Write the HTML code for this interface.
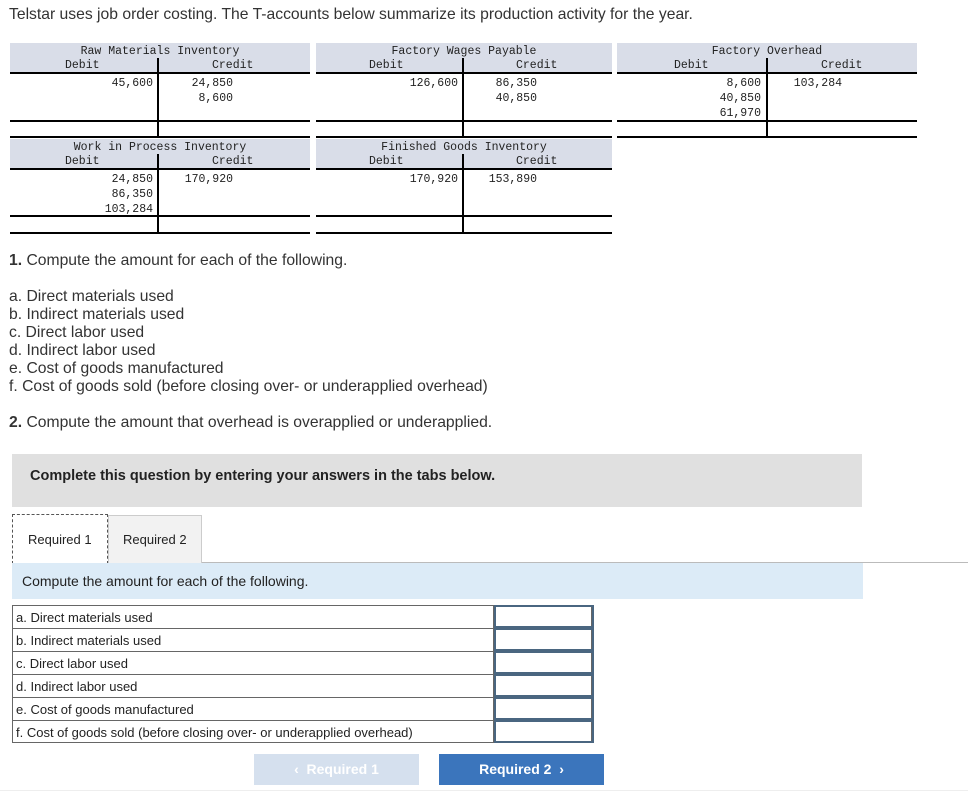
<!DOCTYPE html>
<html><head><style>
body{margin:0;width:968px;height:810px;background:#fff;font-family:"Liberation Sans",sans-serif;color:#333;position:relative;overflow:hidden}
.a{position:absolute}
.m{font-family:"Liberation Mono",monospace;font-size:11.5px;color:#222;line-height:15px}
.hd{background:#d9dde8}
.ln{background:#000}
.t{font-size:15.7px;color:#333}
</style></head><body>
<div class="a t" style="left:9px;top:6px;">Telstar uses job order costing. The T-accounts below summarize its production activity for the year.</div>

<div class="a hd" style="left:10px;top:43px;width:300px;height:30px"></div>
<div class="a hd" style="left:316px;top:43px;width:296px;height:30px"></div>
<div class="a hd" style="left:617px;top:43px;width:300px;height:30px"></div>
<div class="a ln" style="left:10px;top:72px;width:300px;height:2px"></div>
<div class="a ln" style="left:316px;top:72px;width:296px;height:2px"></div>
<div class="a ln" style="left:617px;top:72px;width:300px;height:2px"></div>
<div class="a ln" style="left:10px;top:120px;width:300px;height:2px"></div>
<div class="a ln" style="left:316px;top:120px;width:296px;height:2px"></div>
<div class="a ln" style="left:617px;top:120px;width:300px;height:2px"></div>
<div class="a ln" style="left:10px;top:136px;width:300px;height:2px"></div>
<div class="a ln" style="left:316px;top:136px;width:296px;height:2px"></div>
<div class="a ln" style="left:617px;top:136px;width:300px;height:2px"></div>
<div class="a ln" style="left:157px;top:58px;width:2px;height:80px"></div>
<div class="a ln" style="left:462px;top:58px;width:2px;height:80px"></div>
<div class="a ln" style="left:766px;top:58px;width:2px;height:80px"></div>

<div class="a m" style="left:10px;top:44px;width:300px;text-align:center">Raw Materials Inventory</div>
<div class="a m" style="left:65px;top:58px">Debit</div><div class="a m" style="left:212px;top:58px">Credit</div>
<div class="a m" style="left:60px;top:76px;width:93px;text-align:right">45,600</div>
<div class="a m" style="left:160px;top:76px;width:73px;text-align:right">24,850<br>8,600</div>

<div class="a m" style="left:316px;top:44px;width:296px;text-align:center">Factory Wages Payable</div>
<div class="a m" style="left:369px;top:58px">Debit</div><div class="a m" style="left:516px;top:58px">Credit</div>
<div class="a m" style="left:360px;top:76px;width:98px;text-align:right">126,600</div>
<div class="a m" style="left:465px;top:76px;width:72px;text-align:right">86,350<br>40,850</div>

<div class="a m" style="left:617px;top:44px;width:300px;text-align:center">Factory Overhead</div>
<div class="a m" style="left:674px;top:58px">Debit</div><div class="a m" style="left:821px;top:58px">Credit</div>
<div class="a m" style="left:660px;top:76px;width:101px;text-align:right">8,600<br>40,850<br>61,970</div>
<div class="a m" style="left:770px;top:76px;width:72px;text-align:right">103,284</div>

<div class="a hd" style="left:10px;top:139px;width:300px;height:30px"></div>
<div class="a hd" style="left:316px;top:139px;width:296px;height:30px"></div>
<div class="a ln" style="left:10px;top:168px;width:300px;height:2px"></div>
<div class="a ln" style="left:316px;top:168px;width:296px;height:2px"></div>
<div class="a ln" style="left:10px;top:215px;width:300px;height:2px"></div>
<div class="a ln" style="left:316px;top:215px;width:296px;height:2px"></div>
<div class="a ln" style="left:10px;top:232px;width:300px;height:2px"></div>
<div class="a ln" style="left:316px;top:232px;width:296px;height:2px"></div>
<div class="a ln" style="left:157px;top:154px;width:2px;height:80px"></div>
<div class="a ln" style="left:462px;top:154px;width:2px;height:80px"></div>

<div class="a m" style="left:10px;top:140px;width:300px;text-align:center">Work in Process Inventory</div>
<div class="a m" style="left:65px;top:154px">Debit</div><div class="a m" style="left:212px;top:154px">Credit</div>
<div class="a m" style="left:60px;top:172px;width:93px;text-align:right">24,850<br>86,350<br>103,284</div>
<div class="a m" style="left:160px;top:172px;width:73px;text-align:right">170,920</div>

<div class="a m" style="left:316px;top:140px;width:296px;text-align:center">Finished Goods Inventory</div>
<div class="a m" style="left:369px;top:154px">Debit</div><div class="a m" style="left:516px;top:154px">Credit</div>
<div class="a m" style="left:360px;top:172px;width:98px;text-align:right">170,920</div>
<div class="a m" style="left:465px;top:172px;width:72px;text-align:right">153,890</div>

<div class="a t" style="left:9px;top:252px"><b>1.</b> Compute the amount for each of the following.</div>
<div class="a t" style="left:9px;top:288px;line-height:18px">a. Direct materials used<br>b. Indirect materials used<br>c. Direct labor used<br>d. Indirect labor used<br>e. Cost of goods manufactured<br>f. Cost of goods sold (before closing over- or underapplied overhead)</div>
<div class="a t" style="left:9px;top:414px"><b>2.</b> Compute the amount that overhead is overapplied or underapplied.</div>

<div class="a" style="left:12px;top:454px;width:850px;height:53px;background:#e0e0e0"></div>
<div class="a" style="left:30px;top:468px;font-size:14.5px;font-weight:bold;color:#222">Complete this question by entering your answers in the tabs below.</div>

<div class="a" style="left:12px;top:562px;width:956px;height:1px;background:#bbb"></div>
<div class="a" style="left:108px;top:515px;width:92px;height:47px;background:#f2f2f2;border:1px solid #ccc;border-bottom:none"></div>
<div class="a" style="left:12px;top:514px;width:94px;height:48px;background:#fff;border:1px dashed #555"></div>
<div class="a" style="left:28px;top:532px;font-size:13px;color:#222">Required 1</div>
<div class="a" style="left:123px;top:532px;font-size:13px;color:#222">Required 2</div>
<div class="a" style="left:12px;top:563px;width:851px;height:36px;background:#dcebf7"></div>
<div class="a" style="left:22px;top:573px;font-size:14px;color:#222">Compute the amount for each of the following.</div>

<div class="a" style="left:12px;top:605px;width:580px;height:138px;border:1px solid #666;box-sizing:border-box"></div>
<div class="a" style="left:12px;top:605px;font-size:13px;color:#222">
<div style="height:23px;line-height:25px;padding-left:4px;width:477px;border-bottom:1px solid #666">a. Direct materials used</div>
<div style="height:22px;line-height:24px;padding-left:4px;width:477px;border-bottom:1px solid #666">b. Indirect materials used</div>
<div style="height:22px;line-height:24px;padding-left:4px;width:477px;border-bottom:1px solid #666">c. Direct labor used</div>
<div style="height:22px;line-height:24px;padding-left:4px;width:477px;border-bottom:1px solid #666">d. Indirect labor used</div>
<div style="height:22px;line-height:24px;padding-left:4px;width:477px;border-bottom:1px solid #666">e. Cost of goods manufactured</div>
<div style="height:22px;line-height:24px;padding-left:4px;width:477px">f. Cost of goods sold (before closing over- or underapplied overhead)</div>
</div>
<div class="a" style="left:493px;top:605px;width:1px;height:138px;background:#666"></div>
<div class="a" style="left:494px;top:605px">
<div style="width:96px;height:19px;border:2px solid #4a6680"></div>
<div style="width:96px;height:19px;border:2px solid #4a6680"></div>
<div style="width:96px;height:19px;border:2px solid #4a6680"></div>
<div style="width:96px;height:19px;border:2px solid #4a6680"></div>
<div style="width:96px;height:19px;border:2px solid #4a6680"></div>
<div style="width:96px;height:19px;border:2px solid #4a6680"></div>
</div>

<div class="a" style="left:254px;top:754px;width:165px;height:31px;background:#d5e0ee;color:#fff;font-size:14px;font-weight:bold;text-align:center;line-height:31px">&lsaquo;&nbsp; Required 1</div>
<div class="a" style="left:439px;top:754px;width:165px;height:31px;background:#3b75bc;color:#fff;font-size:14px;font-weight:bold;text-align:center;line-height:31px">Required 2 &nbsp;&rsaquo;</div>
<div class="a" style="left:0;top:790px;width:968px;height:1px;background:#eee"></div>
</body></html>
